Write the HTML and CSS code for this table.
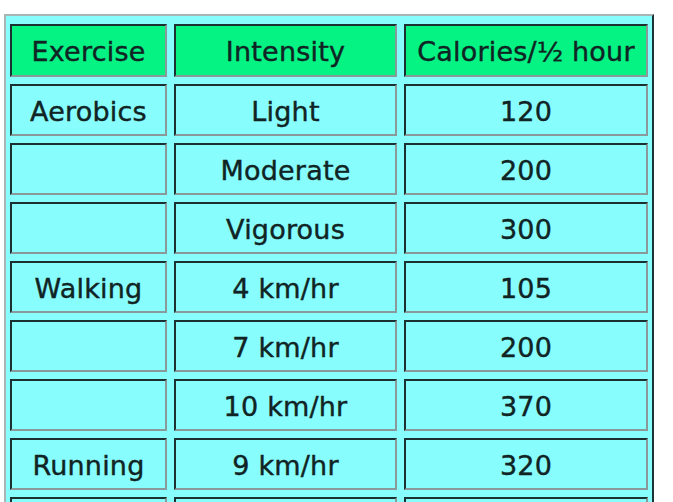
FILE: index.html
```html
<!DOCTYPE html>
<html>
<head>
<meta charset="utf-8">
<link rel="stylesheet" href="styles.css">
</head>
<body>
<div class="table">
  <div class="cell head">Exercise</div>
  <div class="cell head">Intensity</div>
  <div class="cell head">Calories/½ hour</div>

  <div class="cell">Aerobics</div>
  <div class="cell">Light</div>
  <div class="cell">120</div>

  <div class="cell"></div>
  <div class="cell">Moderate</div>
  <div class="cell">200</div>

  <div class="cell"></div>
  <div class="cell">Vigorous</div>
  <div class="cell">300</div>

  <div class="cell">Walking</div>
  <div class="cell">4 km/hr</div>
  <div class="cell">105</div>

  <div class="cell"></div>
  <div class="cell">7 km/hr</div>
  <div class="cell">200</div>

  <div class="cell"></div>
  <div class="cell">10 km/hr</div>
  <div class="cell">370</div>

  <div class="cell">Running</div>
  <div class="cell">9 km/hr</div>
  <div class="cell">320</div>

  <div class="cell"></div>
  <div class="cell"></div>
  <div class="cell"></div>
</div>
</body>
</html>
```
FILE: styles.css
```css
html, body {
  margin: 0;
  padding: 0;
  background: #ffffff;
  height: 502px;
  overflow: hidden;
}

.table {
  margin: 14px 0 0 4px;
  width: 650px;
  box-sizing: border-box;
  background: #88fdfd;
  border: 2px solid;
  border-color: #a9b4b4 #1e3434 #1e3434 #a9b4b4;
  padding: 8px 4px 0 4px;
  display: grid;
  grid-template-columns: 157px 223px 244px;
  grid-auto-rows: 52px;
  grid-template-rows: 53px;
  column-gap: 7px;
  row-gap: 7px;
  font-family: "DejaVu Sans", Verdana, sans-serif;
  font-size: 27px;
  letter-spacing: 0.2px;
  color: #102424;
  -webkit-text-stroke: 0.4px #102424;
}

.cell {
  box-sizing: border-box;
  border: 2px solid;
  border-color: #1b3030 #8a9a9a #8a9a9a #1b3030;
  background: #88fdfd;
  display: flex;
  align-items: center;
  justify-content: center;
  white-space: nowrap;
  padding-top: 2px;
}

.head {
  background: #05f383;
}
```
